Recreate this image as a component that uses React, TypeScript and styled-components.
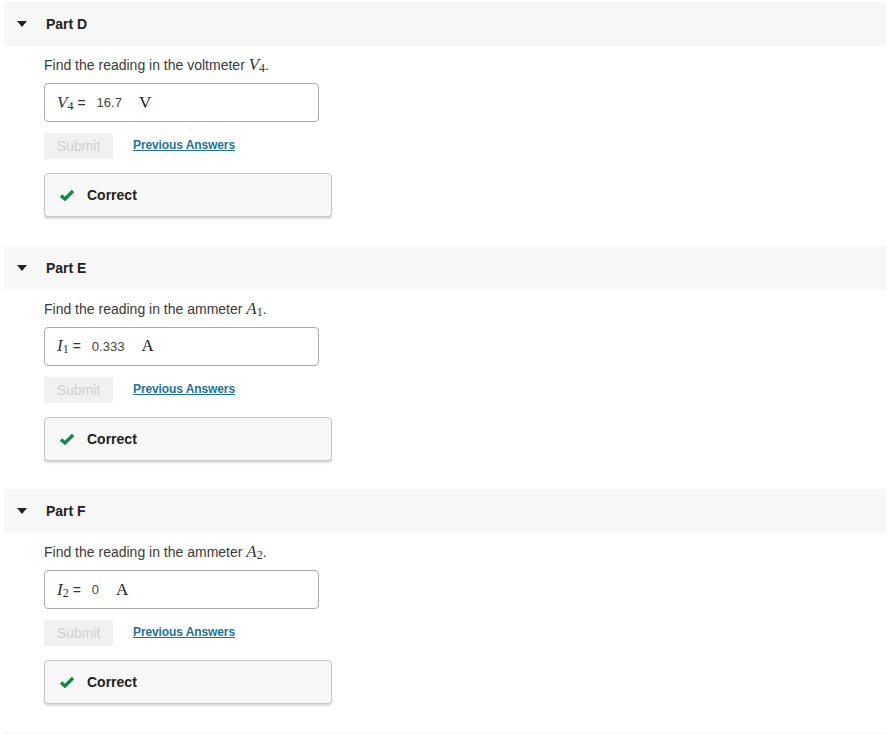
import React from "react";
import styled, { createGlobalStyle } from "styled-components";

const GlobalStyle = createGlobalStyle`
  html, body {
    margin: 0;
    padding: 0;
    background: #fff;
    font-family: "Liberation Sans", Arial, sans-serif;
    color: #333;
  }
`;

const Page = styled.div`
  padding: 2px 1px 0 4px;
`;

const Section = styled.section`
  padding-bottom: 28.5px;
`;

const PartHeader = styled.div`
  display: flex;
  align-items: center;
  height: 44px;
  background: #f7f7f7;
  padding-left: 13px;
`;

const Caret = styled.span`
  width: 0;
  height: 0;
  border-left: 5px solid transparent;
  border-right: 5px solid transparent;
  border-top: 6px solid #222;
  margin-right: 19px;
`;

const PartTitle = styled.h3`
  margin: 0;
  font-size: 14px;
  font-weight: bold;
  color: #222;
`;

const Body = styled.div`
  padding: 9px 0 0 40px;
  display: flex;
  flex-direction: column;
  align-items: flex-start;
`;

const Prompt = styled.p`
  margin: 0;
  font-size: 14px;
  line-height: 20px;
  color: #3a3a3a;
`;

const MathVar = styled.span`
  font-family: "Liberation Serif", "Times New Roman", serif;
  font-style: italic;
  font-size: 17px;
  color: #333;
`;

const Sub = styled.sub`
  font-family: "Liberation Serif", "Times New Roman", serif;
  font-style: normal;
  font-size: 12px;
  vertical-align: -2px;
  line-height: 0;
`;

const AnswerBox = styled.div`
  box-sizing: border-box;
  margin-top: 8px;
  width: 275px;
  height: 39px;
  border: 1px solid #aaa;
  border-radius: 4px;
  display: flex;
  align-items: center;
  padding-left: 12px;
  font-size: 14px;
  color: #333;
`;

const Equals = styled.span`
  margin: 0 11px 0 4px;
`;

const Value = styled.span`
  font-size: 13px;
  color: #444;
`;

const Unit = styled.span`
  font-family: "Liberation Serif", "Times New Roman", serif;
  font-size: 17px;
  margin-left: 17px;
  color: #222;
`;

const Actions = styled.div`
  margin-top: 11px;
  display: flex;
  align-items: center;
  gap: 20px;
`;

const SubmitButton = styled.button`
  width: 69px;
  height: 26px;
  border: none;
  background: #f1f1f1;
  color: #d0d0d0;
  font-family: "Liberation Sans", Arial, sans-serif;
  font-size: 14px;
  padding: 0;
  cursor: default;
`;

const PrevLink = styled.a`
  font-size: 12px;
  font-weight: bold;
  letter-spacing: -0.1px;
  color: #1a73a0;
  text-decoration: underline;
  margin-top: -2px;
`;

const Feedback = styled.div`
  box-sizing: border-box;
  margin-top: 14px;
  width: 288px;
  height: 44px;
  background: #f8f8f8;
  border: 1px solid #c8c8c8;
  border-radius: 4px;
  box-shadow: 0 2px 2px rgba(0, 0, 0, 0.15);
  display: flex;
  align-items: center;
  padding-left: 15px;
  gap: 13px;
`;

const FeedbackText = styled.span`
  font-size: 14px;
  font-weight: bold;
  color: #222;
`;

const Divider = styled.div`
  height: 1px;
  background: #f3f3f3;
`;

const Check = () => (
  <svg width="14" height="12" viewBox="0 0 14 12">
    <path d="M1 6.5 L5 10 L13 2" fill="none" stroke="#138a43" strokeWidth="3.4" />
  </svg>
);

type Part = {
  label: string;
  meter: string;
  meterSymbol: string;
  meterSub: string;
  symbol: string;
  sub: string;
  value: string;
  unit: string;
};

const parts: Part[] = [
  { label: "Part D", meter: "voltmeter", meterSymbol: "V", meterSub: "4", symbol: "V", sub: "4", value: "16.7", unit: "V" },
  { label: "Part E", meter: "ammeter", meterSymbol: "A", meterSub: "1", symbol: "I", sub: "1", value: "0.333", unit: "A" },
  { label: "Part F", meter: "ammeter", meterSymbol: "A", meterSub: "2", symbol: "I", sub: "2", value: "0", unit: "A" },
];

const App = () => {
  return (
    <Page>
      <GlobalStyle />
      {parts.map((p) => (
        <Section key={p.label}>
          <PartHeader>
            <Caret />
            <PartTitle>{p.label}</PartTitle>
          </PartHeader>
          <Body>
            <Prompt>
              Find the reading in the {p.meter}{" "}
              <MathVar>
                {p.meterSymbol}
                <Sub>{p.meterSub}</Sub>
              </MathVar>
              .
            </Prompt>
            <AnswerBox>
              <MathVar>
                {p.symbol}
                <Sub>{p.sub}</Sub>
              </MathVar>
              <Equals>=</Equals>
              <Value>{p.value}</Value>
              <Unit>{p.unit}</Unit>
            </AnswerBox>
            <Actions>
              <SubmitButton disabled>Submit</SubmitButton>
              <PrevLink href="#">Previous Answers</PrevLink>
            </Actions>
            <Feedback>
              <Check />
              <FeedbackText>Correct</FeedbackText>
            </Feedback>
          </Body>
        </Section>
      ))}
      <Divider />
    </Page>
  );
};

export default App;
